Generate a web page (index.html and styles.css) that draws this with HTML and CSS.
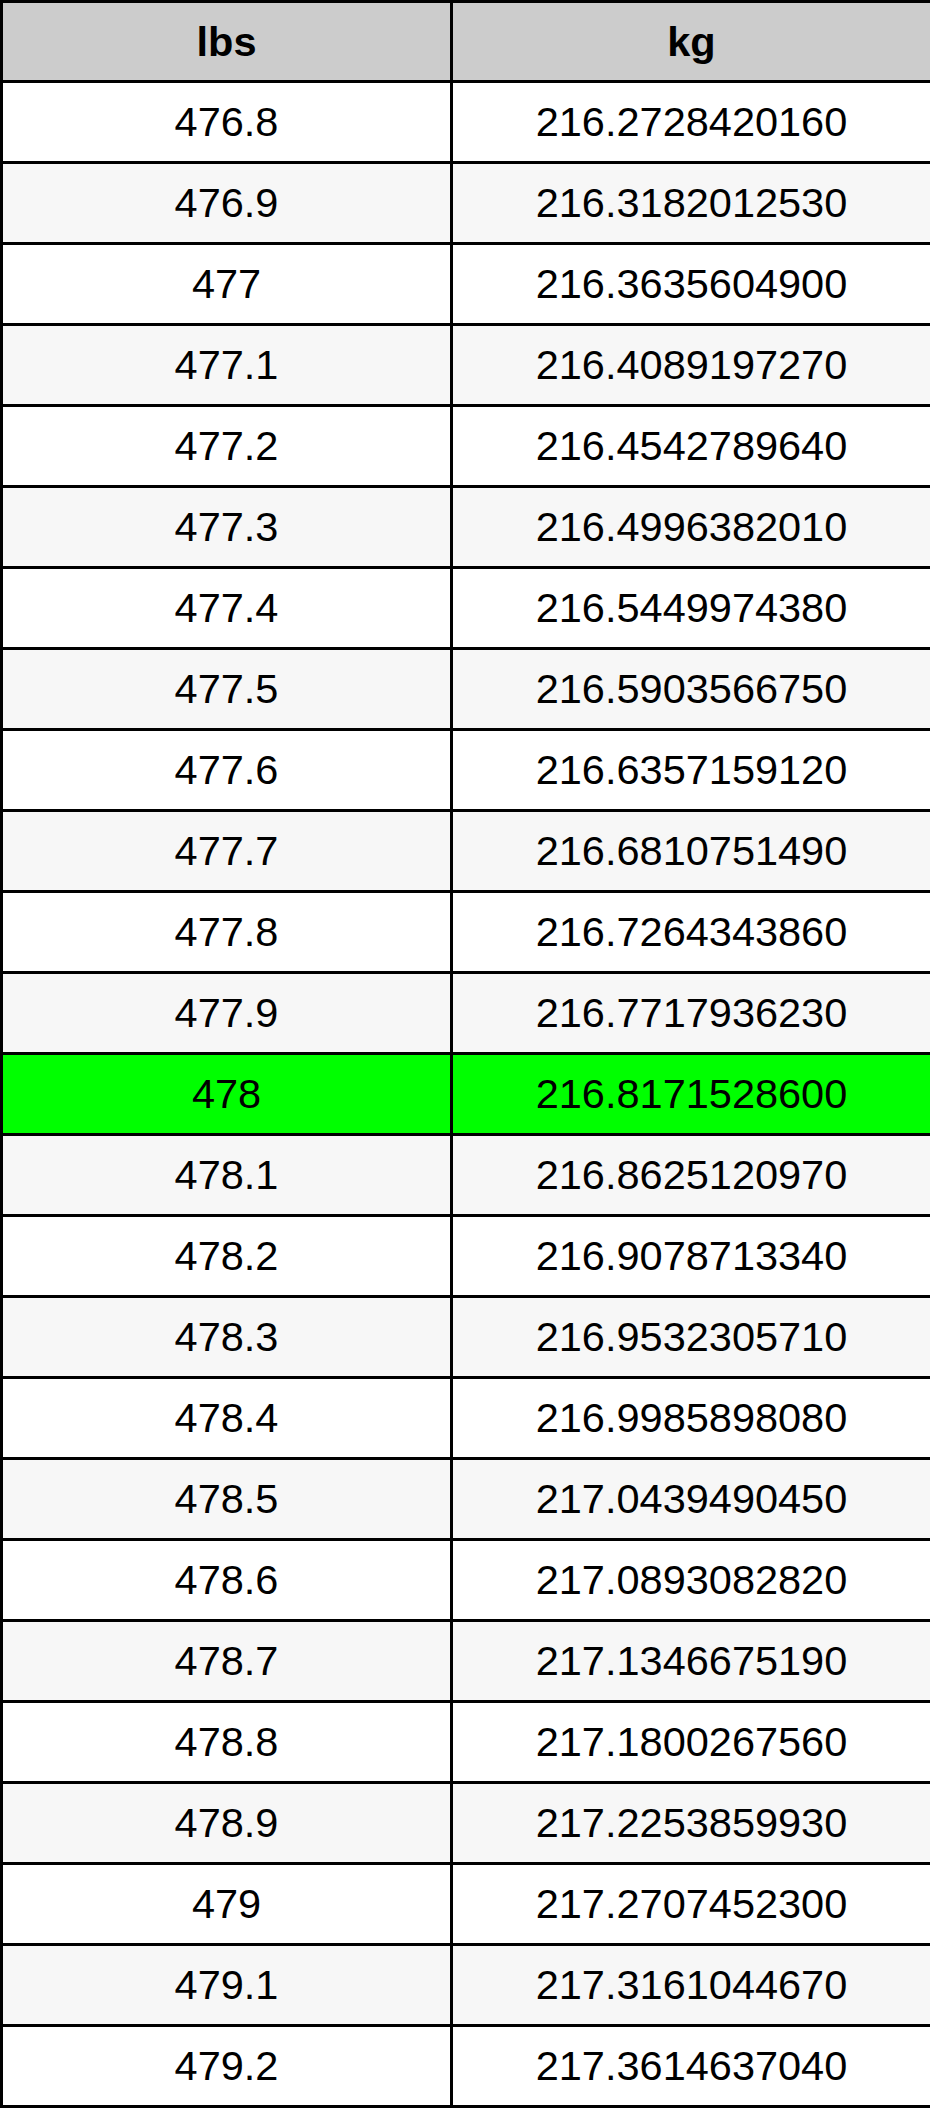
FILE: index.html
```html
<!DOCTYPE html>
<html lang="en">
<head>
<meta charset="utf-8">
<title>lbs to kg</title>
<link rel="stylesheet" href="styles.css">
</head>
<body>
<table class="conv">
<colgroup><col class="c-lbs"><col class="c-kg"></colgroup>
<thead>
<tr><th>lbs</th><th>kg</th></tr>
</thead>
<tbody>
<tr><td>476.8</td><td>216.2728420160</td></tr>
<tr><td>476.9</td><td>216.3182012530</td></tr>
<tr><td>477</td><td>216.3635604900</td></tr>
<tr><td>477.1</td><td>216.4089197270</td></tr>
<tr><td>477.2</td><td>216.4542789640</td></tr>
<tr><td>477.3</td><td>216.4996382010</td></tr>
<tr><td>477.4</td><td>216.5449974380</td></tr>
<tr><td>477.5</td><td>216.5903566750</td></tr>
<tr><td>477.6</td><td>216.6357159120</td></tr>
<tr><td>477.7</td><td>216.6810751490</td></tr>
<tr><td>477.8</td><td>216.7264343860</td></tr>
<tr><td>477.9</td><td>216.7717936230</td></tr>
<tr class="hl"><td>478</td><td>216.8171528600</td></tr>
<tr><td>478.1</td><td>216.8625120970</td></tr>
<tr><td>478.2</td><td>216.9078713340</td></tr>
<tr><td>478.3</td><td>216.9532305710</td></tr>
<tr><td>478.4</td><td>216.9985898080</td></tr>
<tr><td>478.5</td><td>217.0439490450</td></tr>
<tr><td>478.6</td><td>217.0893082820</td></tr>
<tr><td>478.7</td><td>217.1346675190</td></tr>
<tr><td>478.8</td><td>217.1800267560</td></tr>
<tr><td>478.9</td><td>217.2253859930</td></tr>
<tr><td>479</td><td>217.2707452300</td></tr>
<tr><td>479.1</td><td>217.3161044670</td></tr>
<tr><td>479.2</td><td>217.3614637040</td></tr>
</tbody>
</table>
</body>
</html>
```
FILE: styles.css
```css
html, body {
  margin: 0;
  padding: 0;
  background: #ffffff;
}
.conv {
  width: 930px;
  border-collapse: collapse;
  table-layout: fixed;
  font-family: "Liberation Sans", Arial, sans-serif;
  font-size: 41.5px;
  color: #000000;
}
.c-lbs { width: 450px; }
.c-kg { width: 480px; }
.conv th,
.conv td {
  border: 3px solid #000000;
  padding: 0;
  text-align: center;
  vertical-align: middle;
  line-height: 1;
}
.conv th {
  background: #cccccc;
  font-weight: bold;
  height: 77px;
}
.conv td {
  height: 78px;
}
.conv tbody tr:nth-child(even) td {
  background: #f7f7f7;
}
.conv tbody tr.hl td {
  background: #00ff00;
}
```
